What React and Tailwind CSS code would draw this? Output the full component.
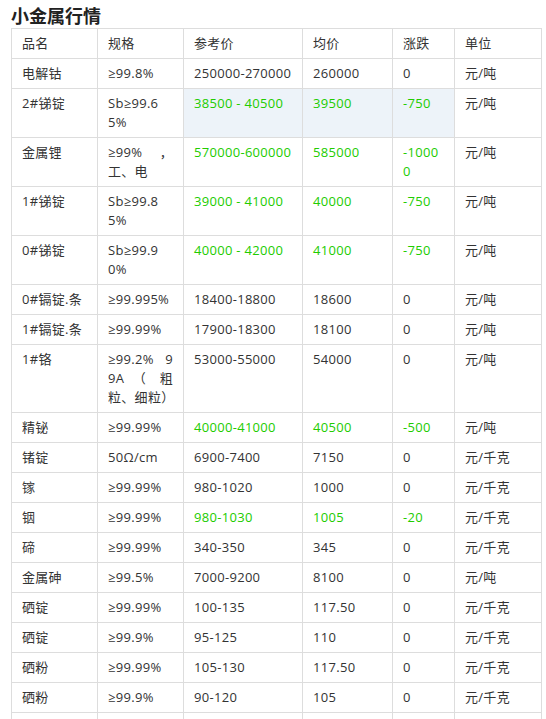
import React from 'react';

const G = 'text-[#22cc00]';

// 每行: 品名, 规格, 参考价, 均价, 涨跌, 单位, 是否下跌(绿色), 是否高亮
const rows = [
  { name: '电解钴', spec: ['≥99.8%'], range: '250000-270000', avg: '260000', chg: ['0'], unit: '元/吨' },
  { name: '2#锑锭', spec: ['Sb≥99.6', '5%'], range: '38500 - 40500', avg: '39500', chg: ['-750'], unit: '元/吨', down: true, hover: true },
  { name: '金属锂', spec: ['≥99% ，', '工、电'], justify: true, range: '570000-600000', avg: '585000', chg: ['-1000', '0'], unit: '元/吨', down: true },
  { name: '1#锑锭', spec: ['Sb≥99.8', '5%'], range: '39000 - 41000', avg: '40000', chg: ['-750'], unit: '元/吨', down: true },
  { name: '0#锑锭', spec: ['Sb≥99.9', '0%'], range: '40000 - 42000', avg: '41000', chg: ['-750'], unit: '元/吨', down: true },
  { name: '0#镉锭.条', spec: ['≥99.995%'], range: '18400-18800', avg: '18600', chg: ['0'], unit: '元/吨' },
  { name: '1#镉锭.条', spec: ['≥99.99%'], range: '17900-18300', avg: '18100', chg: ['0'], unit: '元/吨' },
  { name: '1#铬', spec: ['≥99.2% 9', '9A （ 粗', '粒、细粒）'], justify: true, range: '53000-55000', avg: '54000', chg: ['0'], unit: '元/吨' },
  { name: '精铋', spec: ['≥99.99%'], range: '40000-41000', avg: '40500', chg: ['-500'], unit: '元/吨', down: true },
  { name: '锗锭', spec: ['50Ω/cm'], range: '6900-7400', avg: '7150', chg: ['0'], unit: '元/千克' },
  { name: '镓', spec: ['≥99.99%'], range: '980-1020', avg: '1000', chg: ['0'], unit: '元/千克' },
  { name: '铟', spec: ['≥99.99%'], range: '980-1030', avg: '1005', chg: ['-20'], unit: '元/千克', down: true },
  { name: '碲', spec: ['≥99.99%'], range: '340-350', avg: '345', chg: ['0'], unit: '元/千克' },
  { name: '金属砷', spec: ['≥99.5%'], range: '7000-9200', avg: '8100', chg: ['0'], unit: '元/吨' },
  { name: '硒锭', spec: ['≥99.99%'], range: '100-135', avg: '117.50', chg: ['0'], unit: '元/千克' },
  { name: '硒锭', spec: ['≥99.9%'], range: '95-125', avg: '110', chg: ['0'], unit: '元/千克' },
  { name: '硒粉', spec: ['≥99.99%'], range: '105-130', avg: '117.50', chg: ['0'], unit: '元/千克' },
  { name: '硒粉', spec: ['≥99.9%'], range: '90-120', avg: '105', chg: ['0'], unit: '元/千克' },
];

const td = 'border border-[#dddddd] px-[10px] py-[5px] align-top';

function Lines({ lines, justify }) {
  return lines.map((l, i) => (
    <div
      key={i}
      className={justify && i < lines.length - 1 ? 'text-justify [text-align-last:justify] whitespace-pre' : 'whitespace-nowrap'}
    >
      {l}
    </div>
  ));
}

export default function App() {
  return (
    <div className="bg-white min-h-screen pl-[11px] text-[#333] font-['Open_Sans','Noto_Sans_CJK_SC',sans-serif]">
      <h2 className="h-[28px] text-[18px] leading-[30px] font-bold text-[#222] font-['Noto_Sans_CJK_SC',sans-serif]">
        小金属行情
      </h2>
      <table className="table-fixed border-collapse w-[530px] text-[13px] leading-[19px] tracking-[0.3px]">
        <colgroup>
          <col className="w-[86px]" />
          <col className="w-[86px]" />
          <col className="w-[119px]" />
          <col className="w-[90px]" />
          <col className="w-[62px]" />
          <col className="w-[87px]" />
        </colgroup>
        <thead>
          <tr>
            {['品名', '规格', '参考价', '均价', '涨跌', '单位'].map((h) => (
              <th key={h} className={`${td} font-normal text-left`}>{h}</th>
            ))}
          </tr>
        </thead>
        <tbody>
          {rows.map((r, i) => {
            const c = r.down ? G : '';
            const hl = r.hover ? 'bg-[#edf3f9]' : '';
            return (
              <tr key={i}>
                <td className={td}>{r.name}</td>
                <td className={td}><Lines lines={r.spec} justify={r.justify} /></td>
                <td className={`${td} ${c} ${hl} whitespace-nowrap`}>{r.range}</td>
                <td className={`${td} ${c} ${hl}`}>{r.avg}</td>
                <td className={`${td} ${c} ${hl}`}><Lines lines={r.chg} /></td>
                <td className={td}>{r.unit}</td>
              </tr>
            );
          })}
          {/* 下一行在可视区域之外 */}
          <tr>
            {[0, 1, 2, 3, 4, 5].map((k) => (
              <td key={k} className={td}>&nbsp;</td>
            ))}
          </tr>
        </tbody>
      </table>
    </div>
  );
}
